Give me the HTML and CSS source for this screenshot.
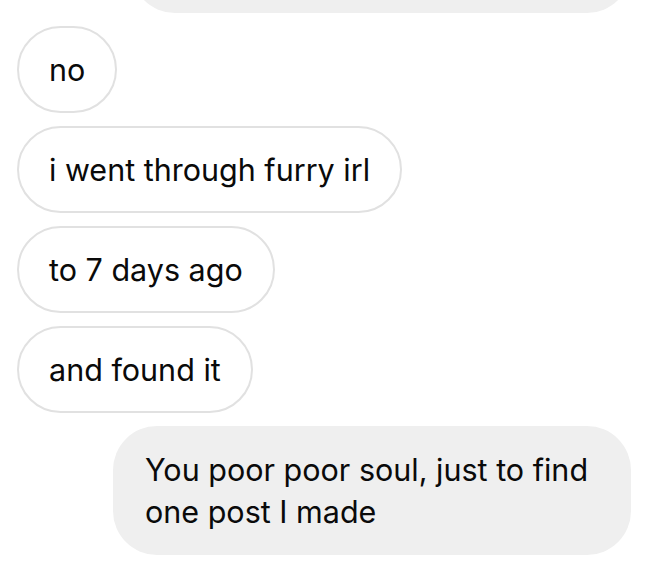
FILE: index.html
```html
<!DOCTYPE html>
<html lang="en">
<head>
<meta charset="utf-8">
<title>Chat</title>
<link rel="stylesheet" href="styles.css">
</head>
<body>
<main class="thread">
  <div class="bubble mine peek" aria-hidden="true"></div>
  <div class="bubble theirs">no</div>
  <div class="bubble theirs">i went through furry irl</div>
  <div class="bubble theirs">to 7 days ago</div>
  <div class="bubble theirs">and found it</div>
  <div class="bubble mine reply">You poor poor soul, just to find one post I made</div>
</main>
</body>
</html>
```
FILE: styles.css
```css
html, body {
  margin: 0;
  padding: 0;
  background: #ffffff;
}

body {
  font-family: "Inter", "Liberation Sans", sans-serif;
  color: #0a0a0a;
  overflow: hidden;
}

.thread {
  display: flex;
  flex-direction: column;
  align-items: flex-start;
  gap: 13px;
  padding: 0 22px 0 17px;
}

.bubble {
  box-sizing: border-box;
  font-size: 30.5px;
  line-height: 42px;
  padding: 20.5px 30px;
  border-radius: 44px;
  border: 2px solid transparent;
}

.theirs {
  background: #ffffff;
  border-color: #e1e1e1;
}

.mine {
  background: #efefef;
  align-self: flex-end;
}

.peek {
  width: 500px;
  height: 129px;
  margin-top: -116px;
}

.reply {
  width: 518px;
}
```
